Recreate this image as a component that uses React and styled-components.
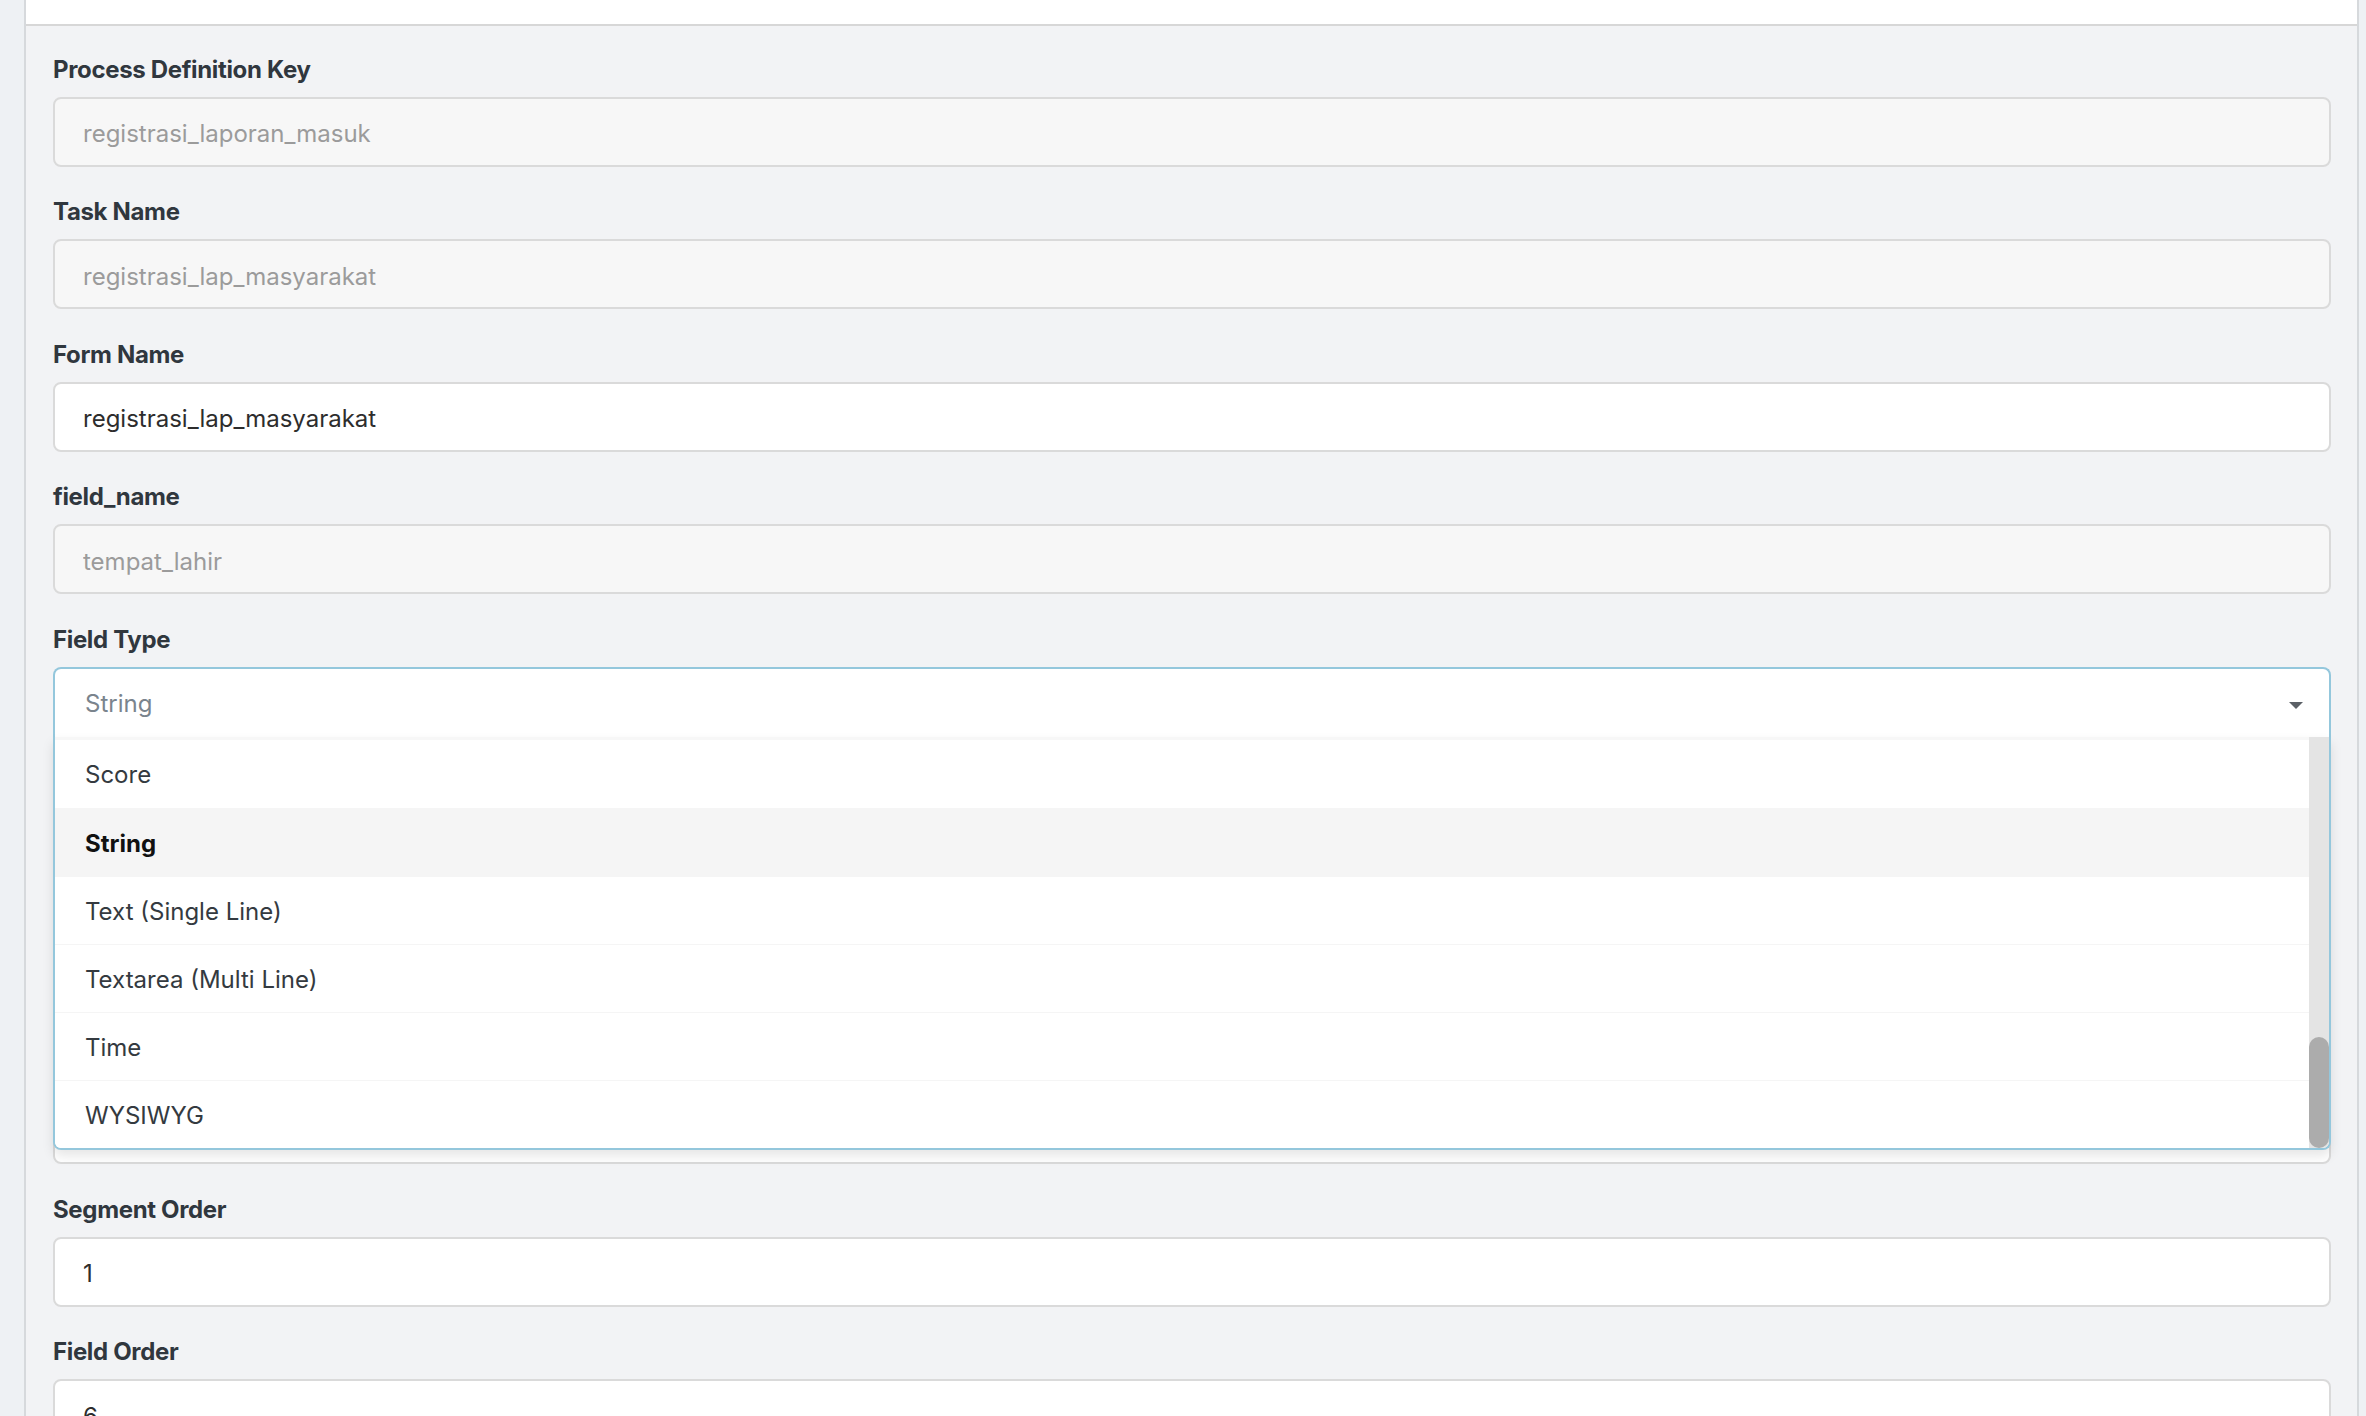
import React from 'react'
import styled, { createGlobalStyle } from 'styled-components'

const GlobalStyle = createGlobalStyle`
  html, body {
    margin: 0;
    padding: 0;
    overflow: hidden;
    background: #eef1f4;
  }
  * {
    box-sizing: border-box;
  }
`

const Page = styled.div`
  display: flex;
  height: 100vh;
  padding: 0 7px 0 23.5px;
  background: #eef1f4;
  font-family: Inter, "Liberation Sans", sans-serif;
`

const Card = styled.div`
  flex: 1;
  background: #f2f3f5;
  border-left: 2px solid #d6d9dc;
  border-right: 2px solid #d6d9dc;
  overflow: hidden;
`

const CardTop = styled.div`
  height: 26px;
  background: #fff;
  border-bottom: 2px solid #d7d7d7;
`

const CardBody = styled.div`
  padding: 22.6px 26.3px 0 27.5px;
`

const Field = styled.div`
  margin-bottom: 24.5px;
`

const Label = styled.label`
  display: block;
  min-height: 39px;
  padding-top: 3px;
  margin-bottom: 9px;
  font-size: 24px;
  line-height: 36px;
  font-weight: 700;
  letter-spacing: -0.34px;
  color: #30373e;
`

const Input = styled.input`
  display: block;
  width: 100%;
  height: 70px;
  padding: 4px 28px 0 28px;
  border: 2px solid #dadada;
  border-radius: 8px;
  font-family: inherit;
  font-size: 24px;
  color: ${p => (p.readOnly ? '#9b9b9b' : '#2d2d2d')};
  background: ${p => (p.readOnly ? '#f7f7f7' : '#fff')};
  outline: none;
`

const SelectWrap = styled.div`
  position: relative;
  z-index: 5;
`

const SelectControl = styled.div`
  display: flex;
  align-items: center;
  height: 70px;
  padding: 2px 26px 0 30px;
  background: #fff;
  border: 2px solid #94c7dc;
  border-bottom: none;
  border-radius: 8px 8px 0 0;
  font-size: 24px;
  color: #7a848d;
`

const Caret = styled.span`
  margin-left: auto;
  margin-top: 3px;
  width: 0;
  height: 0;
  border-left: 7px solid transparent;
  border-right: 7px solid transparent;
  border-top: 7px solid #5b6066;
`

const Menu = styled.div`
  position: absolute;
  top: 100%;
  left: 0;
  right: 0;
  display: flex;
  background: #fff;
  border: 2px solid #94c7dc;
  border-top: none;
  border-radius: 0 0 8px 8px;
  box-shadow: 0 6px 12px rgba(0, 0, 0, 0.1);
  overflow: hidden;
`

const OptionList = styled.div`
  flex: 1;
  border-top: 3px solid #f7f7f7;
`

const Option = styled.div`
  display: flex;
  align-items: center;
  height: 68px;
  padding: 2px 0 0 30px;
  font-size: 24px;
  font-weight: ${p => (p.$selected ? 700 : 400)};
  color: ${p => (p.$selected ? '#111' : '#343a40')};
  background: ${p => (p.$selected ? '#f5f5f5' : '#fff')};
  & + & {
    border-top: 1px solid #f5f5f5;
  }
`

const ScrollTrack = styled.div`
  display: flex;
  flex-direction: column;
  justify-content: flex-end;
  width: 20px;
  padding-top: 1px;
  background: #e4e4e4;
`

const ScrollThumb = styled.div`
  height: 111px;
  border-radius: 10px;
  background: #acacac;
`

const fieldTypes = [
  'Score',
  'String',
  'Text (Single Line)',
  'Textarea (Multi Line)',
  'Time',
  'WYSIWYG'
]

const TextField = ({ label, value, readOnly }) => (
  <Field>
    <Label>{label}</Label>
    <Input value={value} readOnly={readOnly} onChange={() => {}} />
  </Field>
)

const SelectField = ({ label, value, options }) => (
  <Field>
    <Label>{label}</Label>
    <SelectWrap>
      <SelectControl>
        {value}
        <Caret />
      </SelectControl>
      <Menu>
        <OptionList>
          {options.map(o => (
            <Option key={o} $selected={o === value}>{o}</Option>
          ))}
        </OptionList>
        <ScrollTrack>
          <ScrollThumb />
        </ScrollTrack>
      </Menu>
    </SelectWrap>
  </Field>
)

export default function App () {
  return (
    <Page>
      <GlobalStyle />
      <Card>
        <CardTop />
        <CardBody>
          <TextField label="Process Definition Key" value="registrasi_laporan_masuk" readOnly />
          <TextField label="Task Name" value="registrasi_lap_masyarakat" readOnly />
          <TextField label="Form Name" value="registrasi_lap_masyarakat" />
          <TextField label="field_name" value="tempat_lahir" readOnly />
          <SelectField label="Field Type" value="String" options={fieldTypes} />
          {/* fields hidden behind the open dropdown */}
          <TextField label="" value="" />
          <TextField label="" value="" />
          <TextField label="" value="" />
          <TextField label="Segment Order" value="1" />
          <TextField label="Field Order" value="6" />
        </CardBody>
      </Card>
    </Page>
  )
}
